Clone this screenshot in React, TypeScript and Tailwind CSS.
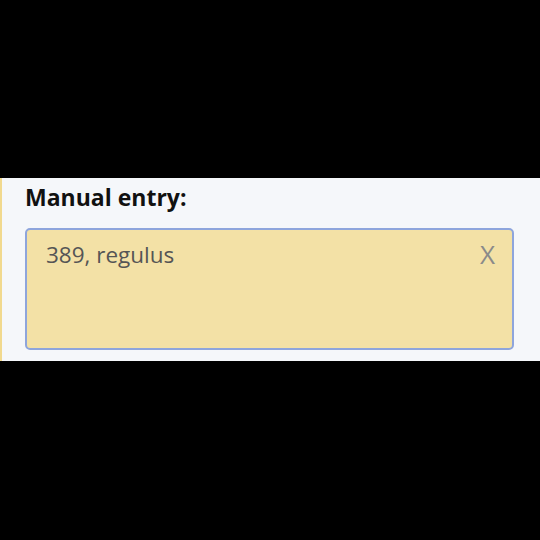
import React from 'react';

const App: React.FC = () => {
    return (
        <div className="w-[540px] h-[540px] bg-black flex flex-col pt-[178px]" style={{ fontFamily: '"Open Sans", "Noto Sans", sans-serif' }}>
            <div className="h-[183px] bg-[#f5f7fa] border-l-2 border-[#f1d98e] pl-[23px] pr-[26px] flex flex-col">
                <div className="h-[50px] pt-[1px] text-[23px] font-bold text-[#111] leading-[36px]">
                    Manual entry:
                </div>
                <div className="h-[122px] bg-[#f3e1a6] border-2 border-[#8ea5dc] rounded-[5px] flex items-start justify-between pl-[19px] pr-[17px] pt-[9px]">
                    <span className="text-[22.5px] text-[#555] leading-[32px]">389, regulus</span>
                    <span className="text-[26px] text-[#8a8a8a] leading-[30px]">X</span>
                </div>
            </div>
        </div>
    );
};

export default App;
